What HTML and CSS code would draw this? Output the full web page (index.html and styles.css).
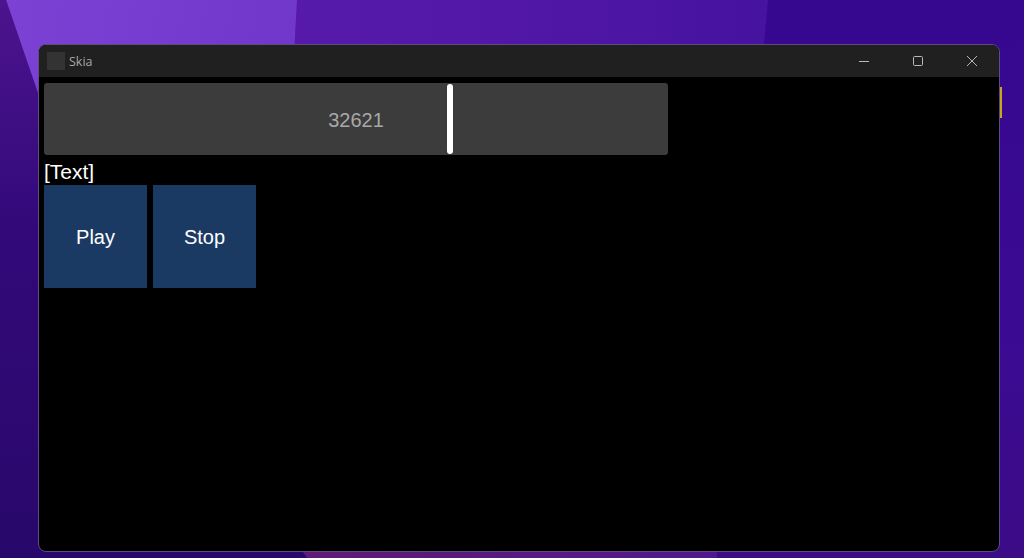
FILE: index.html
```html
<!DOCTYPE html>
<html lang="en">
<head>
  <meta charset="UTF-8">
  <title>Skia</title>
  <link rel="stylesheet" href="styles.css">
</head>
<body>
  <div class="desktop">
    <div class="wall wall-mid"></div>
    <div class="wall wall-light"></div>
    <div class="wall wall-dark"></div>
    <div class="wall wall-glow"></div>
    <div class="peek"></div>

    <div class="window">
      <div class="titlebar">
        <div class="app-icon"></div>
        <div class="title">Skia</div>
        <div class="controls">
          <div class="ctrl">
            <svg width="12" height="12" viewBox="0 0 12 12"><path d="M1 6.5h10" stroke="#b8b8b8" stroke-width="1"/></svg>
          </div>
          <div class="ctrl">
            <svg width="12" height="12" viewBox="0 0 12 12"><rect x="1.5" y="1.5" width="9" height="9" rx="1.2" fill="none" stroke="#b8b8b8" stroke-width="1"/></svg>
          </div>
          <div class="ctrl">
            <svg width="12" height="12" viewBox="0 0 12 12"><path d="M1 1l10 10M11 1L1 11" stroke="#b8b8b8" stroke-width="1"/></svg>
          </div>
        </div>
      </div>

      <div class="content">
        <div class="slider">
          <span class="slider-value">32621</span>
          <div class="thumb" style="left: 403px"></div>
        </div>
        <div class="label">[Text]</div>
        <div class="actions">
          <button class="btn">Play</button>
          <button class="btn">Stop</button>
        </div>
      </div>
    </div>
  </div>
</body>
</html>
```

FILE: styles.css
```css
html, body {
  margin: 0;
  height: 100%;
  overflow: hidden;
}
.desktop {
  position: relative;
  width: 100%;
  height: 100%;
  background: linear-gradient(180deg, #36088f 0%, #3a0a92 60%, #3c0b86 100%);
}
.wall {
  position: absolute;
  inset: 0;
}
/* wallpaper folds, back to front */
.wall-mid {
  background: linear-gradient(90deg, #5a1cae 0%, #5418a8 45%, #4612a0 75%);
  clip-path: polygon(0 0, 75% 0, 70% 100%, 0 100%);
}
.wall-light {
  background: linear-gradient(100deg, #7c42d4 0%, #6a30c6 45%, #5a22ba 100%);
  clip-path: polygon(0 0, 29% 0, 26% 100%, 0 100%);
}
.wall-dark {
  background: linear-gradient(180deg, #4c148e 0%, #33097a 40%, #28086a 100%);
  clip-path: polygon(0 0, 0.6% 0, 9% 45%, 30% 100%, 0 100%);
}
.wall-glow {
  background: linear-gradient(90deg, #6e2274 0%, #5a1a78 40%, rgba(70, 16, 130, 0) 100%);
  clip-path: polygon(29% 96%, 70% 96%, 70% 100%, 30% 100%);
}
.peek {
  position: absolute;
  left: 1000px;
  top: 87px;
  width: 2px;
  height: 31px;
  background: #c9a526;
}

.window {
  position: absolute;
  left: 38px;
  top: 44px;
  width: 960px;
  height: 506px;
  border: 1px solid #5e4c80;
  border-radius: 8px;
  background: #000;
  overflow: hidden;
  font-family: "Liberation Sans", Arial, sans-serif;
  display: flex;
  flex-direction: column;
}
.titlebar {
  height: 32px;
  background: #202020;
  display: flex;
  align-items: center;
  flex-shrink: 0;
}
.app-icon {
  width: 18px;
  height: 18px;
  background: #333;
  margin-left: 8px;
}
.title {
  margin-left: 4px;
  font-family: "Open Sans", "Noto Sans", sans-serif;
  font-size: 12.5px;
  color: #a8a8a8;
  flex: 1;
}
.controls {
  display: flex;
}
.ctrl {
  width: 54px;
  height: 32px;
  display: flex;
  align-items: center;
  justify-content: center;
}

.content {
  padding: 6px 5px;
}
.slider {
  position: relative;
  width: 624px;
  height: 72px;
  background: #3c3c3c;
  border-radius: 3px;
  display: flex;
  align-items: center;
  justify-content: center;
}
.slider-value {
  color: #a8a8a8;
  font-size: 20px;
  padding-top: 2px;
}
.thumb {
  position: absolute;
  top: 1px;
  bottom: 1px;
  width: 6px;
  background: #fff;
  border-radius: 3px;
}
.label {
  color: #fff;
  font-size: 21px;
  line-height: 23px;
  margin: 5px 0 2px;
}
.actions {
  display: flex;
  gap: 6px;
}
.btn {
  width: 103px;
  height: 103px;
  border: none;
  background: #1b3a63;
  color: #fff;
  font-family: "Liberation Sans", Arial, sans-serif;
  font-size: 20px;
  padding: 2px 0 0;
}
```
